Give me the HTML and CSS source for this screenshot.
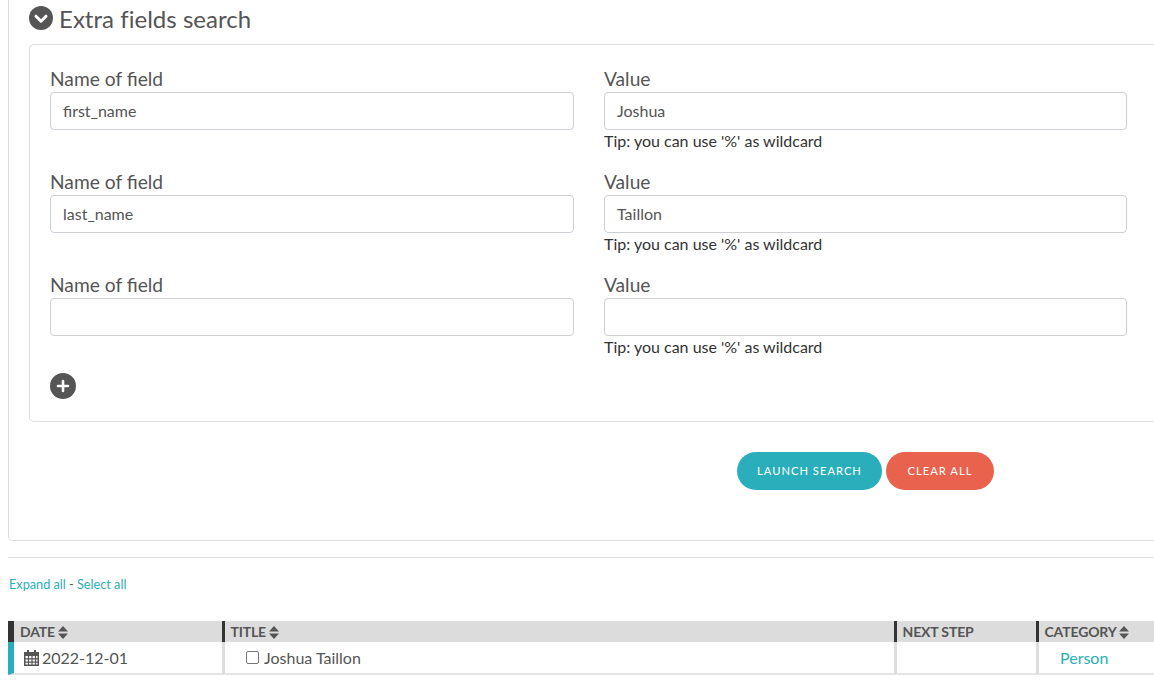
FILE: index.html
```html
<!DOCTYPE html>
<html lang="en">
<head>
<meta charset="utf-8">
<title>Extra fields search</title>
<link rel="stylesheet" href="styles.css">
</head>
<body>
<div class="page">
  <section class="panel">
    <h2 class="heading">
      <svg class="chev" viewBox="0 0 24 24" width="24" height="24"><circle cx="12" cy="12" r="12" fill="#555"/><path d="M7 10.2 12 15.2l5-5" fill="none" stroke="#fff" stroke-width="3" stroke-linecap="round" stroke-linejoin="round"/></svg>
      Extra fields search
    </h2>
    <div class="fieldset">
      <div class="row">
        <div class="col"><label class="lab">Name of field</label><div class="input">first_name</div></div>
        <div class="col"><label class="lab">Value</label><div class="input">Joshua</div><div class="tip">Tip: you can use '%' as wildcard</div></div>
      </div>
      <div class="row">
        <div class="col"><label class="lab">Name of field</label><div class="input">last_name</div></div>
        <div class="col"><label class="lab">Value</label><div class="input">Taillon</div><div class="tip">Tip: you can use '%' as wildcard</div></div>
      </div>
      <div class="row">
        <div class="col"><label class="lab">Name of field</label><div class="input"></div></div>
        <div class="col"><label class="lab">Value</label><div class="input"></div><div class="tip">Tip: you can use '%' as wildcard</div></div>
      </div>
      <svg class="plus" viewBox="0 0 26 26" width="26" height="26"><circle cx="13" cy="13" r="13" fill="#555"/><path d="M13 8v10M8 13h10" stroke="#fff" stroke-width="2.6" stroke-linecap="round"/></svg>
    </div>
    <div class="actions">
      <span class="btn teal">LAUNCH SEARCH</span>
      <span class="btn red">CLEAR ALL</span>
    </div>
  </section>
  <hr class="rule">
  <p class="links"><a>Expand all</a> - <a>Select all</a></p>
  <div class="table">
    <div class="th first">DATE <svg class="sort" viewBox="0 0 10 13" width="10" height="13"><path d="M5 0l5 5.5H0zM5 13l5-5.5H0z" fill="#555"/></svg></div>
    <div class="th">TITLE <svg class="sort" viewBox="0 0 10 13" width="10" height="13"><path d="M5 0l5 5.5H0zM5 13l5-5.5H0z" fill="#555"/></svg></div>
    <div class="th">NEXT STEP</div>
    <div class="th">CATEGORY <svg class="sort" viewBox="0 0 10 13" width="10" height="13"><path d="M5 0l5 5.5H0zM5 13l5-5.5H0z" fill="#555"/></svg></div>
    <div class="td first"><svg class="cal" viewBox="0 0 15 16" width="15" height="16"><path fill="#555" fill-rule="evenodd" d="M3 0h2v2h5V0h2v2h3v14H0V2h3zM1.5 6v2.2h2.4V6zm3.6 0v2.2h2.3V6zm3.5 0v2.2h2.3V6zm3.5 0v2.2h1.4V6zM1.5 9.4v2.2h2.4V9.4zm3.6 0v2.2h2.3V9.4zm3.5 0v2.2h2.3V9.4zm3.5 0v2.2h1.4V9.4zM1.5 12.8v1.8h2.4v-1.8zm3.6 0v1.8h2.3v-1.8zm3.5 0v1.8h2.3v-1.8zm3.5 0v1.8h1.4v-1.8z"/></svg>2022-12-01</div>
    <div class="td title"><span class="check"></span>Joshua Taillon</div>
    <div class="td"></div>
    <div class="td cat"><a>Person</a></div>
  </div>
</div>
</body>
</html>
```

FILE: styles.css
```css
html, body { margin: 0; padding: 0; }
body { font-family: Lato, "Liberation Sans", sans-serif; color: #555; background: #fff; overflow: hidden; }
.page { width: 1154px; height: 684px; overflow: hidden; padding-left: 8px; box-sizing: border-box; }
.panel { width: 1200px; height: 541px; box-sizing: border-box; border: 1px solid #ddd; border-top: 0; border-radius: 0 0 0 5px; padding: 0 0 0 20px; }
.heading { display: flex; align-items: center; gap: 6px; height: 44px; margin: 0; padding-bottom: 6px; box-sizing: border-box; font-size: 24px; font-weight: 400; color: #555; line-height: 38px; letter-spacing: 0.03px; }
.chev { flex: none; margin-top: -2px; }
.fieldset { width: 1200px; height: 378px; box-sizing: border-box; border: 1px solid #ddd; border-radius: 5px 0 0 5px; padding: 21px 0 0 20px; }
.row { display: flex; gap: 30px; height: 103px; }
.col { width: 524px; }
.col + .col { width: 523px; }
.lab { display: block; font-size: 19.2px; line-height: 25px; height: 26px; color: #555; }
.input { height: 38px; box-sizing: border-box; border: 1px solid #ccd0d5; border-radius: 4px; padding: 0 12px; font-size: 16px; line-height: 36px; color: #555; background: #fff; }
.tip { font-size: 16px; line-height: 21px; color: #333; }
.plus { display: block; margin-top: -2px; }
.actions { display: flex; gap: 4px; padding: 30px 0 0 708px; }
.btn { height: 38px; line-height: 38px; border-radius: 19px; color: #fff; font-size: 11.2px; letter-spacing: 1px; text-align: center; }
.teal { background: #2aaebb; width: 145px; }
.red { background: #e8624e; width: 108px; }
.rule { margin: 16px 0 0; border: 0; border-top: 1px solid #ddd; width: 1200px; }
.links { margin: 18px 0 0 1px; font-size: 12.7px; line-height: 16px; color: #555; }
a { color: #2aaebb; }
.table { display: grid; grid-template-columns: 214px 672px 142px 118px; margin-top: 29px; width: 1146px; }
.th { height: 21px; background: #dcdcdc; border-left: 3px solid #333; padding-left: 5.5px; font-size: 14px; font-weight: 700; line-height: 21px; color: #555; box-sizing: border-box; white-space: nowrap; letter-spacing: -0.15px; }
.th.first { border-left-width: 6px; padding-left: 6px; }
.sort { vertical-align: -2px; }
.td { height: 33px; box-sizing: border-box; border-left: 3px solid #ddd; border-bottom: 2px solid #e4e4e4; font-size: 16px; line-height: 32px; color: #555; white-space: nowrap; }
.td.first { border-left: 6px solid #2aaebb; padding-left: 10px; display: flex; align-items: center; gap: 3px; }
.title { padding-left: 21px; display: flex; align-items: center; }
.check { width: 11px; height: 11px; border: 1px solid #767676; border-radius: 2px; margin-right: 5px; background: #fff; }
.cat { padding-left: 21px; }
```
